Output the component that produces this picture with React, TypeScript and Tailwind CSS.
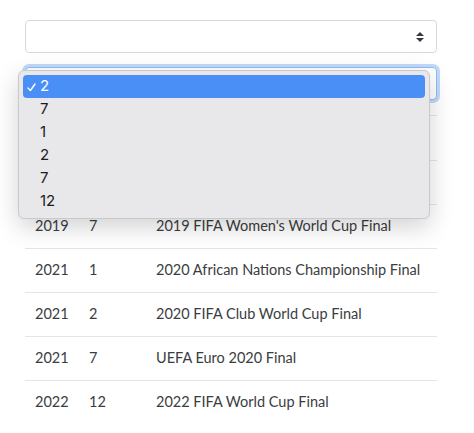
import React from "react";

const rows: [string, string, string][] = [
  ["", "", ""],
  ["2019", "7", "2019 FIFA Women's World Cup Final"],
  ["2021", "1", "2020 African Nations Championship Final"],
  ["2021", "2", "2020 FIFA Club World Cup Final"],
  ["2021", "7", "UEFA Euro 2020 Final"],
  ["2022", "12", "2022 FIFA World Cup Final"],
];

const options = ["2", "7", "1", "2", "7", "12"];

function Arrows() {
  return (
    <svg width="8" height="10" viewBox="0 0 4 5" className="absolute right-[12px] top-1/2 -translate-y-1/2">
      <path fill="#343a40" d="M2 0L0 2h4zm0 5L0 3h4z" />
    </svg>
  );
}

export default function App() {
  return (
    <div className="w-[474px] h-[433px] bg-white overflow-hidden font-['Lato',sans-serif] text-[#3a3d41]">
      <div className="ml-[25px] w-[412px] pt-[20px] flex flex-col">
        <div className="relative h-[33px] rounded-[4px] border border-[#d6d9dc] bg-white">
          <Arrows />
        </div>
        <div className="relative mt-[14px] h-[33px]">
          <div className="h-full rounded-[4px] border border-[#8dbcf5] bg-white shadow-[0_0_0_3px_rgba(120,170,245,0.45)]">
            <Arrows />
          </div>
          <div className="absolute left-[-7px] top-[3px] z-10 w-[412px] rounded-[6px] border border-[#c9c9cc] bg-[#e8e8eb] px-[4px] pt-[4px] pb-[5px] shadow-[0_8px_24px_rgba(0,0,0,0.18)] font-['Inter',sans-serif] text-[15px]">
            {options.map((o, i) => (
              <div
                key={i}
                className={
                  "relative h-[23px] flex items-center rounded-[4px] pl-[17px] " +
                  (i === 0 ? "bg-[#4a8ff6] text-white" : "text-[#1c1c1e]")
                }
              >
                {i === 0 && (
                  <svg width="9" height="9" viewBox="0 0 9 9" className="absolute left-[4px] top-[8px]">
                    <path d="M1 5 L3.4 7.5 L8 1" fill="none" stroke="white" strokeWidth="1.4" strokeLinecap="round" strokeLinejoin="round" />
                  </svg>
                )}
                <span>{o}</span>
              </div>
            ))}
          </div>
        </div>
        <div className="mt-[15px] border-t border-[#e3e5e8] h-[45px]" />
        {rows.map((r, i) => (
          <div key={i} className="grid grid-cols-[54px_67px_1fr] h-[44px] items-center border-t border-[#e3e5e8] text-[14.5px] pb-[2px]">
            <div className="pl-[10px]">{r[0]}</div>
            <div className="pl-[10px]">{r[1]}</div>
            <div className="pl-[10px] whitespace-nowrap">{r[2]}</div>
          </div>
        ))}
      </div>
    </div>
  );
}
